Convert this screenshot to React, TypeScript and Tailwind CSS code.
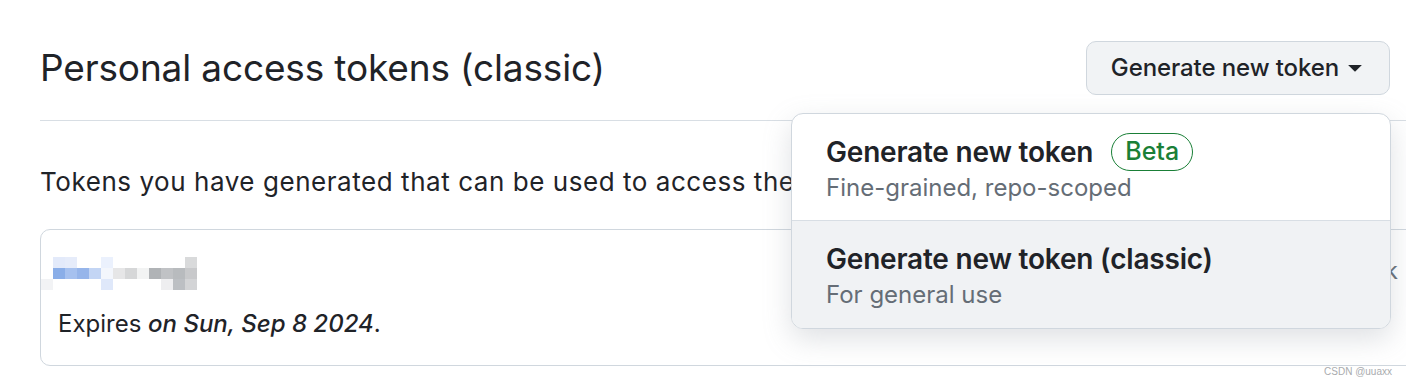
import React from 'react';

// pixelated (blurred-out) token name, drawn as a mosaic
const mosaic: [number, number, string][] = [
  [53, 257, '#e3eafa'], [65, 257, '#e6ecfa'], [101, 257, '#ebf1fd'], [185, 257, '#d9dadb'],
  [53, 268, '#8aaee8'], [65, 268, '#a6c1ef'], [77, 268, '#96b5ea'], [89, 268, '#c3d5f4'],
  [101, 268, '#f3f6fc'], [113, 268, '#e6e6e7'], [125, 268, '#d6d7d8'], [137, 268, '#f2f3f3'],
  [149, 268, '#b0b3b6'], [161, 268, '#c0c2c5'], [173, 268, '#b8bbbe'], [185, 268, '#c8c9cb'],
  [41, 279, '#f2f3f5'], [101, 279, '#dfe8fa'], [161, 279, '#eeeef0'], [173, 279, '#bcbfc3'],
  [185, 279, '#d3d4d6'],
];

const TokenName: React.FC = () => (
  <svg width="160" height="34" viewBox="41 257 160 34" className="block">
    {mosaic.map(([x, y, c], i) => (
      <rect key={i} x={x} y={y} width="12" height="11" fill={c} />
    ))}
  </svg>
);

const Caret: React.FC = () => (
  <svg width="20" height="20" viewBox="0 0 16 16" className="ml-[6px]">
    <path d="M2.5 5.5h11L8 11z" fill="#1f2328" />
  </svg>
);

const App: React.FC = () => {
  return (
    <div
      className="relative w-[1406px] h-[386px] overflow-hidden bg-white text-[#1f2328]"
      style={{ fontFamily: 'Inter, "Noto Sans", sans-serif' }}
    >
      {/* Header */}
      <div className="ml-[40px] pt-[41px] pr-[16px] pb-[25px] flex items-center justify-between border-b border-[#d8dee4]">
        <h2 className="text-[37px] leading-[54px] tracking-[-0.15px] font-normal">Personal access tokens (classic)</h2>
        <button className="h-[54px] w-[304px] flex items-center justify-center rounded-[10px] border border-[#d0d7de] bg-[#f1f3f5] text-[24px] font-medium tracking-[-0.1px]">
          Generate new token
          <Caret />
        </button>
      </div>

      <p className="ml-[40px] mt-[44px] text-[26px] leading-[34px] tracking-[0.55px]">
        Tokens you have generated that can be used to access the GitHub API.
      </p>

      {/* Token card */}
      <div className="ml-[40px] mt-[30px] w-[1420px] h-[137px] rounded-[10px] border border-[#d0d7de] flex justify-between">
        <div className="pt-[27px]">
          <TokenName />
          <div className="mt-[18px] ml-[17px] text-[24px] leading-[30px]">
            Expires <em className="font-medium">on Sun, Sep 8 2024</em>.
          </div>
        </div>
        <div className="pt-[26px] pr-[61px] text-[24px] leading-[30px] text-[#656d76]">
          Last used within the last week
        </div>
      </div>

      {/* Dropdown menu */}
      <div className="absolute left-[791px] top-[113px] w-[600px] rounded-[12px] border border-[#d0d7de] bg-white shadow-[0_10px_28px_rgba(140,149,159,0.28)] overflow-hidden">
        <div className="h-[107px] pl-[34px] pt-[18px] border-b border-[#d8dee4]">
          <div className="flex items-center h-[40px]">
            <span className="text-[28px] font-semibold tracking-[-0.2px]">Generate new token</span>
            <span className="ml-[18px] h-[38px] px-[13px] flex items-center rounded-full border-[1.5px] border-[#1a7f37] text-[#1a7f37] text-[25px] font-medium">
              Beta
            </span>
          </div>
          <div className="text-[24px] leading-[32px] text-[#656d76]">Fine-grained, repo-scoped</div>
        </div>
        <div className="h-[107px] pl-[34px] pt-[18px] bg-[#f0f2f4]">
          <div className="flex items-center h-[40px]">
            <span className="text-[28px] font-semibold tracking-[-0.2px]">Generate new token (classic)</span>
          </div>
          <div className="text-[24px] leading-[32px] text-[#656d76]">For general use</div>
        </div>
      </div>

      {/* watermark */}
      <div
        className="absolute right-[14px] bottom-[8px] text-[10px] leading-[12px] text-[#a9abae]"
        style={{ fontFamily: '"Liberation Sans Narrow", "Liberation Sans", sans-serif' }}
      >
        CSDN @uuaxx
      </div>
    </div>
  );
};

export default App;
